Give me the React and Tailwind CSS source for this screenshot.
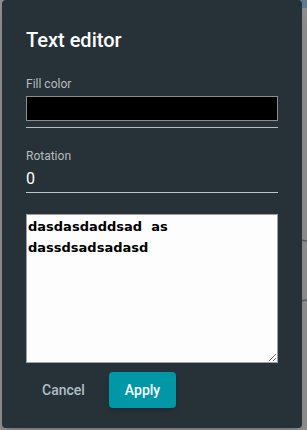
import React, { useState } from "react";

export default function App() {
  const [text, setText] = useState("dasdasdaddsad  as dassdsadsadasd");
  const [rotation, setRotation] = useState("0");

  return (
    <div className="relative w-[307px] h-[430px] overflow-hidden bg-[#8e8e8e]">
      {/* canvas behind the dialog */}
      <svg className="absolute inset-0" width="307" height="430">
        <path d="M14 2 Q40 -6 66 2" stroke="#4f6068" strokeWidth="1.5" fill="none" />
        <rect x="286" y="0" width="21" height="8" fill="#5d7a96" />
        <line x1="300" y1="240" x2="307" y2="241" stroke="#4f6068" strokeWidth="1.5" />
        <line x1="300" y1="301" x2="307" y2="300" stroke="#4f6068" strokeWidth="1.5" />
      </svg>

      <div
        className="relative ml-[2px] w-[300px] h-[428px] rounded-[4px] bg-[#263238] px-6 pt-6 shadow-lg flex flex-col"
        style={{ fontFamily: "Roboto, 'Liberation Sans', sans-serif" }}
      >
        <h2 className="text-[20px] leading-8 font-medium text-white">Text editor</h2>

        <div className="mt-[21px] flex flex-col">
          <label className="text-[12px] leading-[14px] text-[#b8bcbf]">Fill color</label>
          <div className="mt-[5px] h-[25px] w-full border border-[#8a8d8f] bg-black" />
          <div className="mt-[6px] h-px w-full bg-[#b9bdbf]" />
        </div>

        <div className="mt-[21px] flex flex-col">
          <label className="text-[12px] leading-[14px] text-[#b8bcbf]">Rotation</label>
          <input
            value={rotation}
            onChange={(e) => setRotation(e.target.value)}
            className="mt-[6px] h-[20px] bg-transparent text-[16px] text-white outline-none"
          />
          <div className="mt-[3px] h-px w-full bg-[#c0c4c6]" />
        </div>

        <textarea
          value={text}
          onChange={(e) => setText(e.target.value)}
          className="mt-[21px] h-[149px] w-full resize-y border border-[#9aa0a3] bg-[#fdfdfd] px-[1px] pt-[1px] text-[13px] leading-[21px] font-bold text-black outline-none"
          style={{ fontFamily: "'DejaVu Sans', sans-serif" }}
        />

        <div className="mt-[9px] flex items-center gap-2">
          <button className="h-9 px-4 rounded-[4px] text-[14px] font-medium text-[#b0bec5]">
            Cancel
          </button>
          <button className="h-9 px-4 rounded-[4px] bg-[#0097a7] text-[14px] font-medium text-white shadow-md">
            Apply
          </button>
        </div>
      </div>
    </div>
  );
}
